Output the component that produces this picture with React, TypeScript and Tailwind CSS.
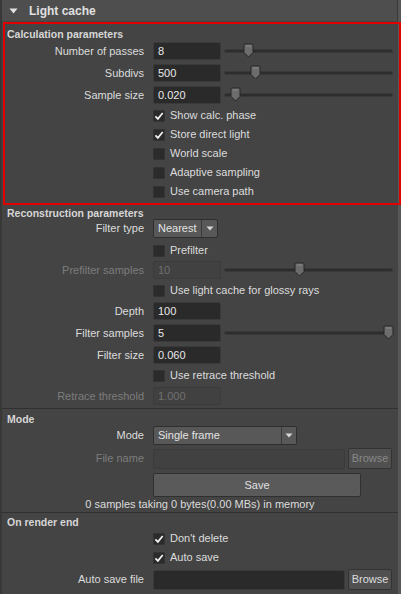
import type { ReactNode } from "react";

const Check = ({ checked = false }: { checked?: boolean }) => (
  <span className="w-[12px] h-[12px] shrink-0 bg-[#2b2b2b] border border-[#333333] rounded-[1px] flex items-center justify-center">
    {checked && (
      <svg width="10" height="10" viewBox="0 0 10 10">
        <path d="M1.4 5.3 L3.9 7.9 L8.7 2" stroke="#f2f2f2" strokeWidth="1.7" fill="none" />
      </svg>
    )}
  </span>
);

const Handle = () => (
  <svg width="11" height="15" viewBox="0 0 11 15">
    <path d="M1 2 Q1 1 2 1 H9 Q10 1 10 2 V9.5 L5.5 14 L1 9.5 Z" fill="#6c6c6c" stroke="#262626" strokeWidth="1" />
    <path d="M3 3 H8" stroke="#8a8a8a" strokeWidth="1" />
  </svg>
);

const Slider = ({ pos }: { pos: number }) => (
  <div className="relative w-[169px] ml-[3px] h-full flex items-center">
    <div className="w-full h-[4px] rounded-full bg-[#2d2d2d] border border-[#393939]" />
    <div className="absolute top-[1px]" style={{ left: pos }}>
      <Handle />
    </div>
  </div>
);

const Field = ({ value, disabled = false, w = "w-[68px]" }: { value: string; disabled?: boolean; w?: string }) => (
  <div
    className={`${w} h-[18px] rounded-[2px] border flex items-center pl-[4px] ${
      disabled ? "bg-[#414141] border-[#3b3b3b] text-[#707070]" : "bg-[#2a2a2a] border-[#3a3a3a] text-[#e8e8e8]"
    }`}
  >
    {value}
  </div>
);

const Dropdown = ({ value, w, aw }: { value: string; w: string; aw: string }) => (
  <div className={`${w} h-[19px] rounded-[2px] bg-[#585858] border border-[#2f2f2f] flex items-center text-[#e4e4e4]`}>
    <span className="flex-1 pl-[4px]">{value}</span>
    <span className={`${aw} h-full border-l border-[#3a3a3a] flex items-center justify-center`}>
      <svg width="8" height="5" viewBox="0 0 8 5">
        <path d="M0.5 0.5 H7.5 L4 4.5 Z" fill="#d8d8d8" />
      </svg>
    </span>
  </div>
);

const Row = ({
  label,
  lw = "w-[151px]",
  cls = "h-[18px]",
  disabled = false,
  children,
}: {
  label?: string;
  lw?: string;
  cls?: string;
  disabled?: boolean;
  children: ReactNode;
}) => (
  <div className={`flex items-center ${cls}`}>
    <div className={`${lw} shrink-0 text-right pr-[9px] whitespace-nowrap ${disabled ? "text-[#7c7c7c]" : "text-[#dcdcdc]"}`}>
      {label}
    </div>
    {children}
  </div>
);

const CheckRow = ({ text, checked = false, lw, cls = "h-[19px]" }: { text: string; checked?: boolean; lw?: string; cls?: string }) => (
  <Row lw={lw} cls={cls}>
    <Check checked={checked} />
    <span className="ml-[5px] text-[#dcdcdc] whitespace-nowrap">{text}</span>
  </Row>
);

const Heading = ({ text, cls }: { text: string; cls: string }) => (
  <div className={`flex items-center font-bold text-[10.5px] text-[#d6d6d6] ${cls}`}>{text}</div>
);

const Browse = ({ disabled = false }: { disabled?: boolean }) => (
  <div
    className={`ml-[3px] w-[44px] h-[21px] rounded-[2px] bg-[#505050] border border-[#333333] flex items-center justify-center ${
      disabled ? "text-[#888888]" : "text-[#dedede]"
    }`}
  >
    Browse
  </div>
);

export default function App() {
  return (
    <div className="w-[401px] h-[594px] bg-[#444444] border-l-2 border-l-[#383838] border-r-[3px] border-r-[#575757] font-['Liberation_Sans',Arial,sans-serif] text-[11px] leading-none">
      <div className="h-[21px] bg-[#4e4e4e] border-r border-[#393939] flex items-center pl-[7px]">
        <svg width="9" height="6" viewBox="0 0 9 6">
          <path d="M0.5 0.5 H8.5 L4.5 5.5 Z" fill="#e2e2e2" />
        </svg>
        <span className="ml-[11px] font-bold text-[12px] text-[#e0e0e0]">Light cache</span>
      </div>

      <div className="mt-[1px] ml-[1px] -mr-[3px] pt-[2px] pb-[4px] shadow-[inset_0_0_0_2px_#e00000]">
        <Heading text="Calculation parameters" cls="h-[18px] pt-[3px] pl-[4px]" />
        <Row label="Number of passes" lw="w-[150px]">
          <Field value="8" />
          <Slider pos={19} />
        </Row>
        <Row label="Subdivs" lw="w-[150px]" cls="h-[18px] mt-[4px]">
          <Field value="500" />
          <Slider pos={26} />
        </Row>
        <Row label="Sample size" lw="w-[150px]" cls="h-[18px] mt-[4px]">
          <Field value="0.020" />
          <Slider pos={6} />
        </Row>
        <CheckRow text="Show calc. phase" checked lw="w-[150px]" cls="h-[19px] mt-[2px]" />
        <CheckRow text="Store direct light" checked lw="w-[150px]" />
        <CheckRow text="World scale" lw="w-[150px]" />
        <CheckRow text="Adaptive sampling" lw="w-[150px]" />
        <CheckRow text="Use camera path" lw="w-[150px]" />
      </div>

      <div className="pb-[3px] border-b border-[#303030]">
        <Heading text="Reconstruction parameters" cls="h-[14px] pt-[2px] pl-[5px]" />
        <Row label="Filter type" cls="h-[19px]">
          <Dropdown value="Nearest" w="w-[65px]" aw="w-[16px]" />
        </Row>
        <CheckRow text="Prefilter" cls="h-[19px] mt-[3px]" />
        <Row label="Prefilter samples" disabled cls="h-[18px] mt-[1px]">
          <Field value="10" disabled />
          <Slider pos={70} />
        </Row>
        <CheckRow text="Use light cache for glossy rays" cls="h-[19px] mt-[2px]" />
        <Row label="Depth" cls="h-[18px] mt-[2px]">
          <Field value="100" />
        </Row>
        <Row label="Filter samples" cls="h-[18px] mt-[4px]">
          <Field value="5" />
          <Slider pos={159} />
        </Row>
        <Row label="Filter size" cls="h-[18px] mt-[4px]">
          <Field value="0.060" />
        </Row>
        <CheckRow text="Use retrace threshold" cls="h-[19px] mt-[2px]" />
        <Row label="Retrace threshold" disabled cls="h-[18px] mt-[2px]">
          <Field value="1.000" disabled />
        </Row>
      </div>

      <div className="pb-[1px] border-b border-[#303030]">
        <Heading text="Mode" cls="h-[17px] pt-[4px] pl-[5px]" />
        <Row label="Mode" cls="h-[19px]">
          <Dropdown value="Single frame" w="w-[144px]" aw="w-[15px]" />
        </Row>
        <Row label="File name" disabled cls="h-[21px] mt-[3px]">
          <Field value="" disabled w="w-[192px] h-[20px]" />
          <Browse disabled />
        </Row>
        <Row cls="h-[24px] mt-[4px]">
          <div className="w-[208px] h-[24px] rounded-[2px] bg-[#5a5a5a] border border-[#303030] flex items-center justify-center text-[#e0e0e0]">
            Save
          </div>
        </Row>
        <div className="h-[14px] flex items-center justify-center text-[#dcdcdc]">
          0 samples taking 0 bytes(0.00 MBs) in memory
        </div>
      </div>

      <div>
        <Heading text="On render end" cls="h-[16px] pt-[3px] pl-[5px]" />
        <CheckRow text="Don't delete" checked />
        <CheckRow text="Auto save" checked />
        <Row label="Auto save file" cls="h-[21px] mt-[2px]">
          <Field value="" w="w-[192px] h-[20px]" />
          <Browse />
        </Row>
      </div>
    </div>
  );
}
